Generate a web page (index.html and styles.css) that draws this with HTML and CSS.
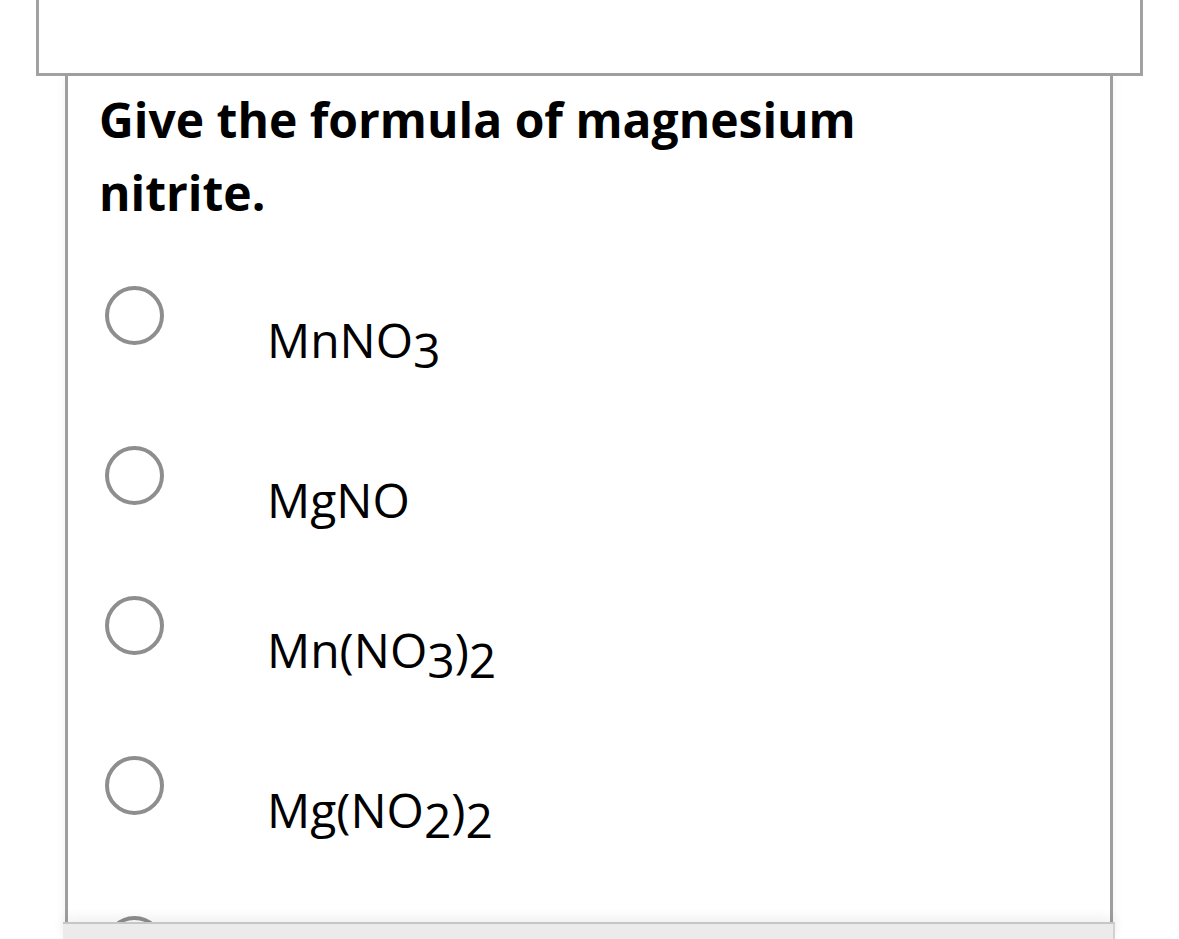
FILE: index.html
```html
<!DOCTYPE html>
<html lang="en">
<head>
<meta charset="utf-8">
<title>Question</title>
<link rel="stylesheet" href="styles.css">
</head>
<body>
<div class="top-box"></div>
<div class="card">
  <p class="question">Give the formula of magnesium nitrite.</p>
  <ul class="options">
    <li class="option"><span class="radio"></span><span class="label">MnNO<span class="sub">3</span></span></li>
    <li class="option"><span class="radio"></span><span class="label">MgNO</span></li>
    <li class="option"><span class="radio"></span><span class="label">Mn(NO<span class="sub">3</span>)<span class="sub">2</span></span></li>
    <li class="option"><span class="radio"></span><span class="label">Mg(NO<span class="sub">2</span>)<span class="sub">2</span></span></li>
    <li class="option"><span class="radio"></span></li>
  </ul>
</div>
<div class="bottom-bar"></div>
</body>
</html>
```

FILE: styles.css
```css
html, body {
  margin: 0;
  padding: 0;
  background: #ffffff;
  overflow: hidden;
  height: 939px;
}

body {
  font-family: "Open Sans", "Liberation Sans", sans-serif;
  color: #000000;
}

.top-box {
  margin-left: 36px;
  width: 1107px;
  height: 76px;
  box-sizing: border-box;
  border: 3px solid #a2a2a2;
  border-top: none;
  background: #ffffff;
}

.card {
  margin-left: 65px;
  width: 1048px;
  height: 863px;
  box-sizing: border-box;
  border-left: 3px solid #9e9e9e;
  border-right: 3px solid #9e9e9e;
  padding: 7px 30px 0 31px;
  overflow: hidden;
  box-shadow: -3px 0 8px rgba(0, 0, 0, 0.03), 3px 0 8px rgba(0, 0, 0, 0.03);
}

.question {
  margin: 0;
  font-weight: 700;
  font-size: 48px;
  line-height: 73px;
  width: 800px;
}

.options {
  list-style: none;
  margin: 57px 0 0 0;
  padding: 0;
}

.option {
  display: flex;
  align-items: flex-start;
  margin-bottom: 64px;
}

.radio {
  flex: none;
  width: 59px;
  height: 59px;
  box-sizing: border-box;
  border: 4px solid #8e8e8e;
  border-radius: 50%;
  margin-left: 6px;
}

.label {
  margin-left: 103px;
  margin-top: 21px;
  font-size: 48px;
  line-height: 65px;
}

.sub {
  vertical-align: -10px;
}

.bottom-bar {
  position: fixed;
  left: 63px;
  top: 922px;
  width: 1052px;
  height: 17px;
  box-sizing: border-box;
  background: #ebebeb;
  border-top: 2px solid #c6c6c6;
  border-right: 2px solid #d2d2d2;
  box-shadow: 0 -5px 12px rgba(0, 0, 0, 0.06);
}
```
